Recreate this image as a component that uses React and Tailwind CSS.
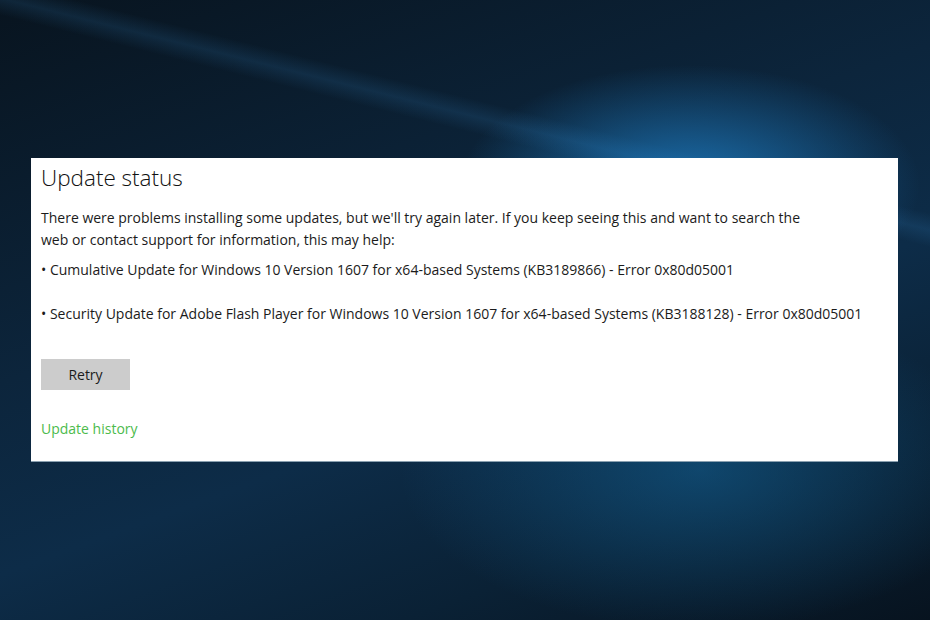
import React from 'react';

const updates = [
  'Cumulative Update for Windows 10 Version 1607 for x64-based Systems (KB3189866) - Error 0x80d05001',
  'Security Update for Adobe Flash Player for Windows 10 Version 1607 for x64-based Systems (KB3188128) - Error 0x80d05001',
];

const App = () => {
  return (
    <div
      className="w-[930px] h-[620px] overflow-hidden pt-[158px] pl-[31px] bg-[radial-gradient(ellipse_230px_120px_at_690px_185px,rgba(30,125,195,0.85),transparent),radial-gradient(ellipse_300px_160px_at_700px_470px,rgba(20,105,160,0.5),transparent),linear-gradient(194deg,transparent_25%,rgba(60,150,220,0.14)_27%,transparent_29%),linear-gradient(160deg,#08141f_0%,#0c253c_40%,#0d2c48_60%,#0a2135_80%,#07131f_100%)]"
      style={{ fontFamily: '"Open Sans", "Noto Sans", sans-serif' }}
    >
      <div className="w-[867px] h-[303px] bg-white pl-[10px] pt-1 text-[#1b1b1b] shadow-[0_1px_0_#8aa0b0]">
        {/* Header */}
        <h1 className="text-[22.5px] leading-[32px] font-light text-[#111]">Update status</h1>

        <p className="mt-[13px] text-[14px] leading-[22px] w-[775px]">
          There were problems installing some updates, but we'll try again later. If you keep seeing this and want to search the web or contact support for information, this may help:
        </p>

        {/* Failed updates */}
        <div className="mt-[8px] flex flex-col gap-[22px]">
          {updates.map((u) => (
            <p key={u} className="text-[14px] leading-[22px]">
              • {u}
            </p>
          ))}
        </div>

        <button className="mt-[34px] w-[89px] h-[31px] bg-[#cccccc] text-[14px] text-[#1b1b1b]">
          Retry
        </button>

        <div className="mt-[28px] text-[14px] leading-[22px] text-[#4cbb4c]">Update history</div>
      </div>
    </div>
  );
};

export default App;
